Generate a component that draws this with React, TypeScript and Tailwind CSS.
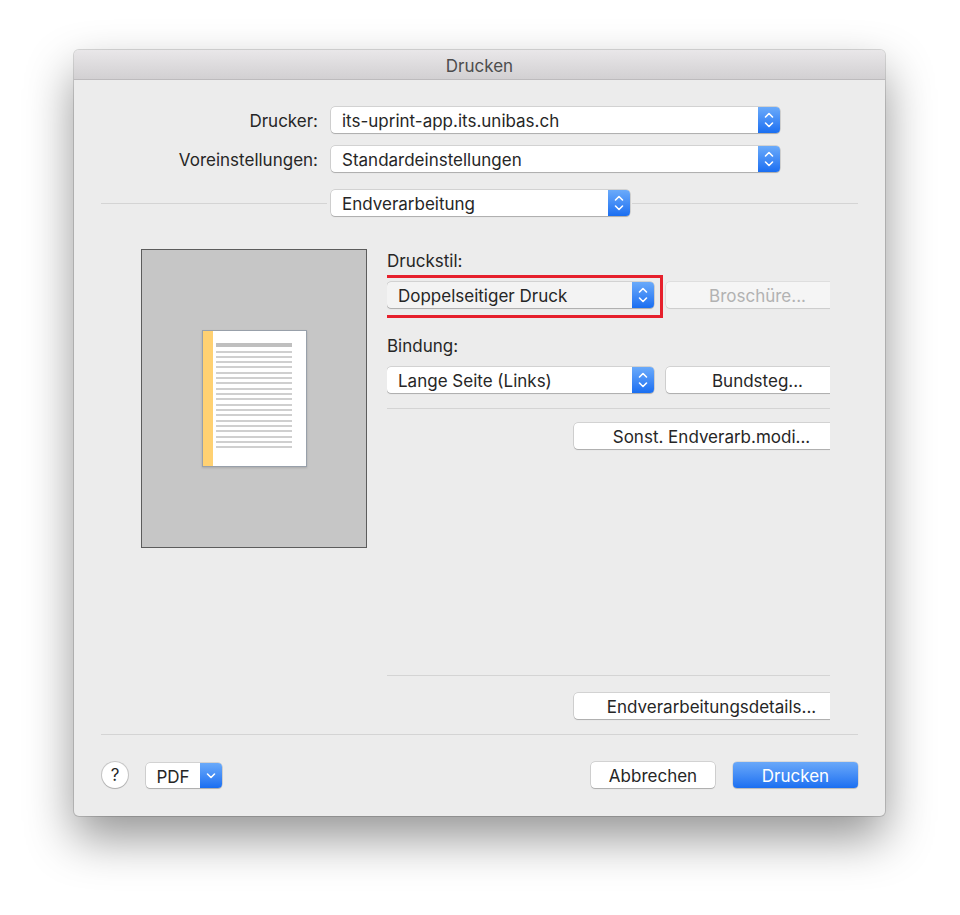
import React from "react";

function Stepper() {
  return (
    <div className="flex h-full w-[22px] shrink-0 items-center justify-center rounded-r-[4px] bg-gradient-to-b from-[#6aaafa] to-[#196ef1]">
      <svg width="22" height="26" viewBox="0 0 22 26" fill="none" stroke="white" strokeWidth="1.6" strokeLinecap="round" strokeLinejoin="round">
        <path d="M7.5 10 L11 6.5 L14.5 10" />
        <path d="M7.5 16 L11 19.5 L14.5 16" />
      </svg>
    </div>
  );
}

function Popup({ text, cls, bg }: { text: string; cls: string; bg: string }) {
  return (
    <div className={`flex h-[26px] rounded-[4px] shadow-[0_0_0_0.5px_rgba(0,0,0,0.22),0_1px_1px_rgba(0,0,0,0.18)] ${bg} ${cls}`}>
      <div className="h-[26px] flex-1 truncate pl-[11px] leading-[29px] text-[#262626]">{text}</div>
      <Stepper />
    </div>
  );
}

function Button({ text, cls }: { text: string; cls: string }) {
  return (
    <div className={`h-[26px] overflow-hidden rounded-[4px] bg-white text-center leading-[29px] text-[#262626] shadow-[0_0_0_0.5px_rgba(0,0,0,0.22),0_1px_1px_rgba(0,0,0,0.18)] ${cls}`}>
      {text}
    </div>
  );
}

export default function App() {
  const lines = Array.from({ length: 19 });
  return (
    <div className="min-h-[915px] w-[960px] bg-white pl-[74px] pt-[50px] font-['Inter','Noto_Sans',sans-serif] text-[17px]">
      <div className="flex h-[766px] w-[811px] flex-col overflow-hidden rounded-[5px] bg-[#ececec] shadow-[0_22px_48px_rgba(0,0,0,0.42),0_0_0_1px_rgba(0,0,0,0.14)]">
        {/* Title bar */}
        <div className="h-[30px] shrink-0 overflow-hidden border-b border-[#bdbbbd] bg-gradient-to-b from-[#e9e7e9] to-[#d2d0d2] text-center leading-[33px] text-[#4d4d4d]">
          Drucken
        </div>

        {/* Drucker */}
        <div className="mt-[27px] flex h-[26px] items-center">
          <div className="h-[26px] w-[244px] text-right leading-[29px] text-[#262626]">Drucker:</div>
          <Popup text="its-uprint-app.its.unibas.ch" cls="ml-[13px] w-[449px]" bg="bg-white" />
        </div>
        {/* Voreinstellungen */}
        <div className="mt-[13px] flex h-[26px] items-center">
          <div className="h-[26px] w-[244px] text-right leading-[29px] text-[#262626]">Voreinstellungen:</div>
          <Popup text="Standardeinstellungen" cls="ml-[13px] w-[449px]" bg="bg-white" />
        </div>
        {/* Section popup */}
        <div className="mt-[18px] flex h-[26px] items-center px-[27px]">
          <div className="mr-[4px] h-px flex-1 bg-[#d4d4d4]" />
          <Popup text="Endverarbeitung" cls="w-[299px]" bg="bg-white" />
          <div className="ml-[2px] h-px flex-1 bg-[#d4d4d4]" />
        </div>

        {/* Main area */}
        <div className="flex h-[518px] shrink-0 pl-[67px] pt-[33px]">
          {/* Preview */}
          <div className="flex h-[299px] w-[226px] shrink-0 items-center justify-center border border-[#5c5c5c] bg-[#c6c6c6]">
            <div className="flex h-[137px] w-[105px] border border-[#98a0aa] bg-white shadow-[0_1px_2px_rgba(0,0,0,0.15)]">
              <div className="w-[10px] bg-[#ffd172]" />
              <div className="ml-[3px] flex w-[76px] flex-col pt-[12px]">
                <div className="h-[4px] bg-[#bfbfbf]" />
                <div className="mt-[3.5px] flex flex-col gap-[3.33px]">
                  {lines.map((_, i) => (
                    <div key={i} className="h-[2px] bg-[#cfcfcf]" />
                  ))}
                </div>
              </div>
            </div>
          </div>

          {/* Right column */}
          <div className="ml-[20px] flex w-[443px] flex-col overflow-hidden pb-[15px]">
            <div className="mt-[2px] h-[20px] leading-[20px] text-[#262626]">Druckstil:</div>
            <div className="mt-[11px] flex h-[26px] items-center">
              <div className="relative">
                <Popup text="Doppelseitiger Druck" cls="w-[267px]" bg="bg-[#f3f3f3]" />
                <div className="pointer-events-none absolute -bottom-[10px] -left-[8px] -right-[9px] -top-[7px] border-[3px] border-[#e6202c]" />
              </div>
              <div className="ml-[12px] -mr-[19px] h-[26px] flex-1 overflow-hidden rounded-[4px] bg-[#f5f5f5] text-center leading-[29px] text-[#b2b2b2] shadow-[0_0_0_0.5px_rgba(0,0,0,0.12),0_1px_1px_rgba(0,0,0,0.08)]">
                Broschüre...
              </div>
            </div>
            <div className="mt-[28px] h-[20px] leading-[20px] text-[#262626]">Bindung:</div>
            <div className="mt-[11px] flex h-[26px] items-center">
              <Popup text="Lange Seite (Links)" cls="w-[267px]" bg="bg-white" />
              <Button text="Bundsteg..." cls="ml-[12px] -mr-[19px] flex-1" />
            </div>
            <div className="mt-[15px] h-px shrink-0 bg-[#d4d4d4]" />
            <div className="mt-[14px] flex justify-end">
              <Button text="Sonst. Endverarb.modi..." cls="-mr-[19px] w-[275px]" />
            </div>
            <div className="flex-1" />
            <div className="h-px shrink-0 bg-[#d4d4d4]" />
            <div className="mt-[17px] flex justify-end">
              <Button text="Endverarbeitungsdetails..." cls="-mr-[19px] w-[275px]" />
            </div>
          </div>
        </div>

        <div className="mx-[27px] h-px shrink-0 bg-[#d4d4d4]" />

        {/* Bottom bar */}
        <div className="mt-[27px] flex h-[26px] items-center pl-[28px] pr-[27px]">
          <div className="flex h-[26px] w-[26px] items-center justify-center rounded-full bg-white pt-[2px] text-[17px] text-[#262626] shadow-[0_0_0_1px_rgba(0,0,0,0.16),0_1px_1px_rgba(0,0,0,0.12)]">
            ?
          </div>
          <div className="ml-[18px] flex h-[25px] w-[76px] rounded-[4px] bg-white shadow-[0_0_0_0.5px_rgba(0,0,0,0.22),0_1px_1px_rgba(0,0,0,0.18)]">
            <div className="h-[25px] flex-1 overflow-hidden text-center leading-[28px] text-[#262626]">PDF</div>
            <div className="flex w-[22px] items-center justify-center rounded-r-[4px] bg-gradient-to-b from-[#6aaafa] to-[#196ef1]">
              <svg width="22" height="25" viewBox="0 0 22 25" fill="none" stroke="white" strokeWidth="1.6" strokeLinecap="round" strokeLinejoin="round">
                <path d="M7.5 11 L11 14.5 L14.5 11" />
              </svg>
            </div>
          </div>
          <div className="flex-1" />
          <Button text="Abbrechen" cls="w-[124px]" />
          <div className="ml-[18px] h-[26px] w-[125px] overflow-hidden rounded-[4px] bg-gradient-to-b from-[#69a8f9] to-[#1a6ff1] text-center leading-[29px] text-white shadow-[0_0_0_0.5px_rgba(0,0,0,0.15),0_1px_1px_rgba(0,0,0,0.15)]">
            Drucken
          </div>
        </div>
      </div>
    </div>
  );
}
